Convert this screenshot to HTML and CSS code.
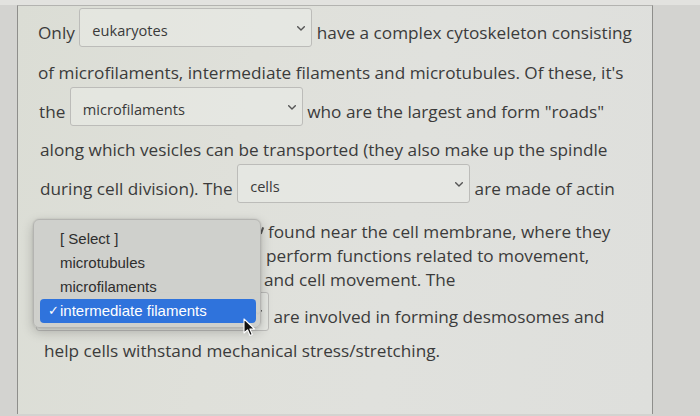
FILE: index.html
```html
<!DOCTYPE html>
<html>
<head>
<meta charset="utf-8">
<link rel="stylesheet" href="styles.css">
</head>
<body>
<div class="screen">
  <div class="frame">
    <div class="q">
      <div class="row r1">Only <span class="select"><span class="lbl">eukaryotes</span><svg class="chev" width="8" height="5" viewBox="0 0 8 5"><polyline points="0.7,0.7 4,4 7.3,0.7"/></svg></span> have a complex cytoskeleton consisting</div>
      <div class="row r2">of microfilaments, intermediate filaments and microtubules. Of these, it's</div>
      <div class="row r3">the <span class="select s3"><span class="lbl">microfilaments</span><svg class="chev" width="8" height="5" viewBox="0 0 8 5"><polyline points="0.7,0.7 4,4 7.3,0.7"/></svg></span> who are the largest and form "roads"</div>
      <div class="row r4">along which vesicles can be transported (they also make up the spindle</div>
      <div class="row r5">during cell division). The <span class="select"><span class="lbl">cells</span><svg class="chev" width="8" height="5" viewBox="0 0 8 5"><polyline points="0.7,0.7 4,4 7.3,0.7"/></svg></span> are made of actin</div>
      <div class="row r6"><span class="hid h6"><span class="tick"></span></span>found near the cell membrane, where they</div>
      <div class="row r7"><span class="hid h7"></span>perform functions related to movement,</div>
      <div class="row r8"><span class="hid h8"></span>and cell movement. The</div>
      <div class="row r9"><span class="select s9"><span class="lbl">&nbsp;</span><svg class="chev" width="8" height="5" viewBox="0 0 8 5"><polyline points="0.7,0.7 4,4 7.3,0.7"/></svg></span> are involved in forming desmosomes and</div>
      <div class="row r10">help cells withstand mechanical stress/stretching.</div>
    </div>

    <div class="popup">
      <div class="opt"><span class="chk"></span>[ Select ]</div>
      <div class="opt"><span class="chk"></span>microtubules</div>
      <div class="opt"><span class="chk"></span>microfilaments</div>
      <div class="opt on"><span class="chk">✓</span>intermediate filaments</div>
    </div>

    <svg class="cursor" width="13" height="19" viewBox="0 0 13 19">
      <path d="M1 1 L1 15 L4.5 11.8 L7 17.5 L9.3 16.5 L6.9 11 L11.5 11 Z" fill="#111" stroke="#fff" stroke-width="1.1" stroke-linejoin="round"/>
    </svg>
  </div>
</div>
</body>
</html>
```

FILE: styles.css
```css
html, body {
  margin: 0;
  padding: 0;
}
body {
  width: 700px;
  height: 416px;
  overflow: hidden;
  background: #d3d3d0;
  font-family: "Open Sans", "Noto Sans", sans-serif;
  color: #3b3b3b;
}
.screen {
  height: 416px;
  padding-top: 5px;
  box-sizing: border-box;
  background: linear-gradient(#e2e2df 0, #e2e2df 5px, #d3d3d0 5px);
}
.frame {
  position: relative;
  margin-left: 17px;
  width: 636px;
  height: 409px;
  box-sizing: border-box;
  border-left: 1px solid #8e8e8b;
  border-right: 1px solid #8e8e8b;
  border-top: 1px solid #b3b3b0;
  background: linear-gradient(100deg, #dbddd5 0%, #dfe0da 35%, #e0e1dd 60%, #dedfdc 100%);
}
.q {
  padding-left: 20px;
  padding-top: 2px;
  font-size: 17.2px;
}
.row {
  line-height: 24px;
  white-space: nowrap;
}
.r2 { margin-top: 14px; }
.r3 { margin-top: 2px; padding-left: 1px; }
.r4 { margin-top: 12px; padding-left: 2px; }
.r5 { margin-top: 2px; padding-left: 2px; }
.r6 { margin-top: 17px; }
.r9 { margin-top: 0; }
.r10 { margin-top: 8px; padding-left: 6px; }

.select {
  display: inline-flex;
  align-items: flex-start;
  justify-content: space-between;
  vertical-align: 3px;
  width: 233px;
  height: 39px;
  box-sizing: border-box;
  padding: 11px 6px 0 12px;
  border: 1px solid #bcbcb9;
  border-radius: 3px;
  background: rgba(238, 239, 235, 0.45);
  font-size: 14.6px;
  line-height: 20px;
  color: #3a3a3a;
}
.s9 { width: 233px; margin-left: -2px; }
.chev {
  margin-top: 6px;
  fill: none;
  stroke: #555;
  stroke-width: 1.4;
  stroke-linecap: round;
  stroke-linejoin: round;
}
.hid {
  display: inline-block;
  position: relative;
}
.h6 { width: 230px; }
.h7 { width: 228px; }
.h8 { width: 226px; }
.tick {
  position: absolute;
  right: 6px;
  top: -11px;
  width: 1.5px;
  height: 7px;
  background: #555;
  transform: rotate(20deg);
}

.popup {
  position: absolute;
  left: 15px;
  top: 213px;
  width: 228px;
  height: 109px;
  box-sizing: border-box;
  padding: 7px 4px 6px 6px;
  border: 1px solid #b4b4b1;
  border-radius: 6px;
  background: rgba(206, 207, 203, 0.96);
  box-shadow: 0 4px 12px rgba(0, 0, 0, 0.22), 0 0 2px rgba(0, 0, 0, 0.15);
  font-family: "Liberation Sans", Arial, sans-serif;
  font-size: 15px;
  color: #2e2e2e;
}
.opt {
  display: flex;
  height: 24px;
  line-height: 24px;
  border-radius: 4px;
}
.chk {
  display: inline-block;
  width: 12px;
  padding-left: 8px;
  font-size: 13px;
}
.opt.on {
  background: #2f73dc;
  color: #ffffff;
}
.cursor {
  position: absolute;
  left: 225px;
  top: 312px;
}
```
